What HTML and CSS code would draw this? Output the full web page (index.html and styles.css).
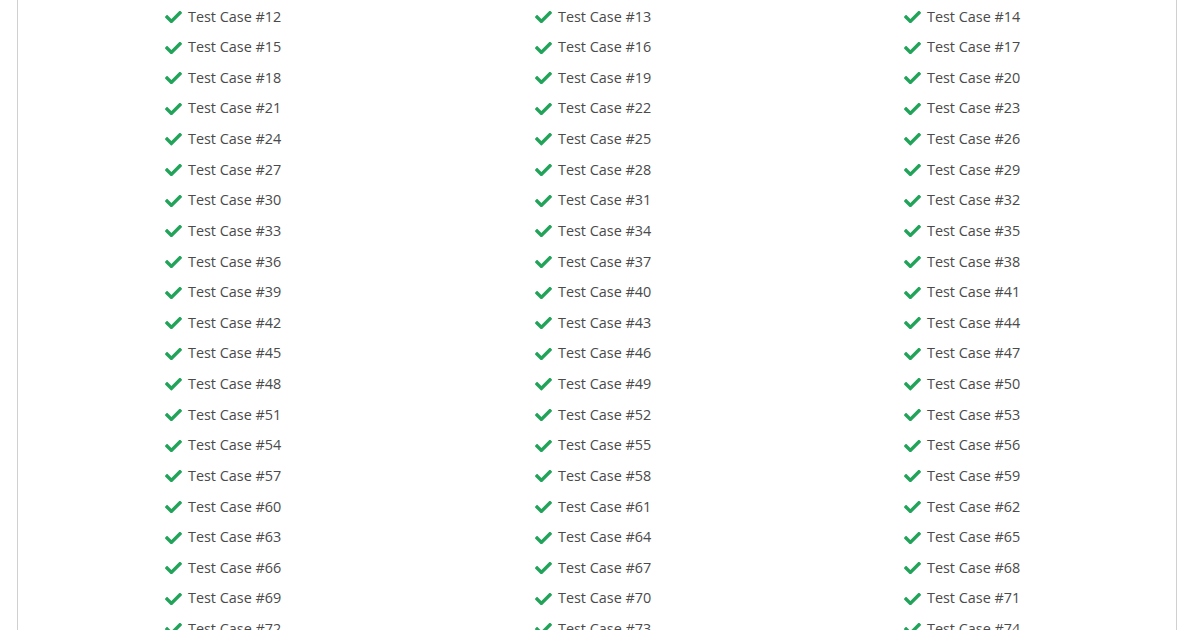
FILE: index.html
```html
<!DOCTYPE html>
<html>
<head>
<meta charset="utf-8">
<link rel="stylesheet" href="styles.css">
</head>
<body>
<div class="panel">
  <ul class="cases" id="cases"></ul>
</div>
<script>
  var ul = document.getElementById('cases');
  var svg = '<svg class="check" viewBox="0 72 512 368"><path d="M173.898 439.404l-166.4-166.4c-9.997-9.997-9.997-26.206 0-36.204l36.203-36.204c9.997-9.998 26.207-9.998 36.204 0L192 312.69 432.095 72.596c9.997-9.997 26.207-9.997 36.204 0l36.203 36.204c9.997 9.997 9.997 26.206 0 36.204l-294.4 294.401c-9.998 9.997-26.207 9.997-36.204-.001z"/></svg>';
  var html = '';
  for (var i = 12; i <= 74; i++) {
    html += '<li class="case">' + svg + '<span>Test Case #' + i + '</span></li>';
  }
  ul.innerHTML = html;
</script>
</body>
</html>
```

FILE: styles.css
```css
html, body {
  margin: 0;
  padding: 0;
  background: #fff;
}
body {
  font-family: "Open Sans", "Noto Sans", sans-serif;
  color: #4a4a4a;
  overflow: hidden;
}
.panel {
  margin-left: 17px;
  width: 1158px;
  height: 700px;
  border-left: 1px solid #d0d0d0;
  border-right: 1px solid #d0d0d0;
}
.cases {
  list-style: none;
  margin: 0;
  padding: 0.7px 0 0 147px;
  display: grid;
  grid-template-columns: 370px 369px 260px;
  grid-auto-rows: 30.63px;
}
.case {
  display: flex;
  align-items: center;
  gap: 6px;
  font-size: 14.4px;
  white-space: nowrap;
}
.check {
  width: 17px;
  height: 12.2px;
  fill: #22a35a;
  flex: none;
  position: relative;
  top: 1px;
}
```
